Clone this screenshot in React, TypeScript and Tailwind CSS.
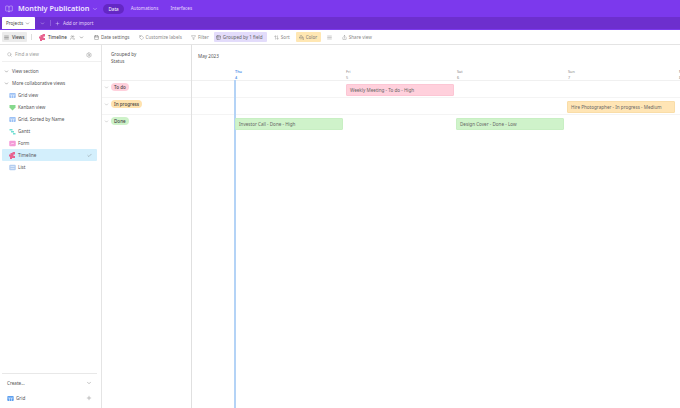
import React from 'react';
import { ChevronDown, Plus, Search, Settings, Check, Filter, ArrowUpDown, Share, Table2, Tag, PaintBucket, AlignJustify, BookOpen, Calendar, Users } from 'lucide-react';

function ViewIcon({ color, kind }: { color: string; kind: string }) {
  return (
    <svg width="7" height="7" viewBox="0 0 14 14" className="shrink-0">
      {kind === 'grid' && (
        <>
          <rect x="0.5" y="2" width="13" height="10" rx="2" fill={color} />
          <path d="M1 6h12M5 6v6M9 6v6" stroke="#fff" strokeWidth="1" />
        </>
      )}
      {kind === 'kanban' && <path d="M1 2h12v5l-6 6-6-6z" fill={color} />}
      {kind === 'gantt' && <path d="M1 2h6v3H1zM4 6h6v3H4zM8 10h5v3H8z" fill={color} />}
      {kind === 'form' && (
        <>
          <rect x="0.5" y="1.5" width="13" height="11" rx="2" fill={color} />
          <path d="M4 9l2-3 2 2 2-2" stroke="#fff" strokeWidth="1" fill="none" />
        </>
      )}
      {kind === 'timeline' && <path d="M7 0h5v5H9v3h3v4H6v2H2V9H0V5h3V2h4z" fill={color} />}
      {kind === 'list' && (
        <>
          <rect x="0.5" y="1.5" width="13" height="11" rx="2" fill={color} />
          <path d="M3 5h8M3 9h8" stroke="#fff" strokeWidth="1" />
        </>
      )}
    </svg>
  );
}

const views = [
  { name: 'Grid view', color: '#9cc1f5', kind: 'grid' },
  { name: 'Kanban view', color: '#86d98d', kind: 'kanban' },
  { name: 'Grid, Sorted by Name', color: '#9cc1f5', kind: 'grid' },
  { name: 'Gantt', color: '#72e0d4', kind: 'gantt' },
  { name: 'Form', color: '#f49ad8', kind: 'form' },
  { name: 'Timeline', color: '#e8638f', kind: 'timeline', active: true },
  { name: 'List', color: '#b3cdf0', kind: 'list' },
];

const groups = [
  { name: 'To do', className: 'bg-[#ffd0dc]', line: true },
  { name: 'In progress', className: 'bg-[#ffe2ae]', line: true },
  { name: 'Done', className: 'bg-[#cdf2c8]', line: false },
];

const days = [
  { label: 'Thu', num: '4', today: true },
  { label: 'Fri', num: '5' },
  { label: 'Sat', num: '6' },
  { label: 'Sun', num: '7' },
  { label: 'M', num: '8' },
];

const events = [
  { title: 'Weekly Meeting - To do - High', className: 'left-[154px] top-[39px] bg-[#ffd0dc] border-[#fcc6d4]' },
  { title: 'Hire Photographer - In progress - Medium', className: 'left-[375px] top-[56px] bg-[#ffe5b5] border-[#f9dda8]' },
  { title: 'Investor Call - Done - High', className: 'left-[43px] top-[73px] bg-[#cff3ca] border-[#c8efc3]' },
  { title: 'Design Cover - Done - Low', className: 'left-[264px] top-[73px] bg-[#cff3ca] border-[#c8efc3]' },
];

function ToolItem({ icon, label, className = '' }: { icon: React.ReactNode; label: string; className?: string }) {
  return (
    <div className={`flex h-[10px] items-center gap-[2px] rounded-[1px] ${className}`}>
      {icon}
      {label && <span>{label}</span>}
    </div>
  );
}

export default function App() {
  return (
    <div className="flex h-[408px] w-[680px] flex-col overflow-hidden bg-white font-['Noto_Sans',sans-serif] text-[4.6px] text-[#555]">
      <div className="flex h-[17px] shrink-0 items-center bg-[#7c39ed] text-white">
        <BookOpen size={8} strokeWidth={1.5} className="ml-[5px] text-[#ddd0fb]" />
        <span className="ml-[5px] text-[7.3px] leading-none font-semibold text-[#efe8fe]">Monthly Publication</span>
        <ChevronDown size={6} className="ml-[3px] text-[#d8c8fa]" />
        <span className="ml-[5px] rounded-full bg-[#6427c4] px-[5px] py-[2px] leading-[6px]">Data</span>
        <span className="ml-[7px] text-[#e6dbfc]">Automations</span>
        <span className="ml-[12px] text-[#e6dbfc]">Interfaces</span>
      </div>
      <div className="flex h-[12px] shrink-0 items-end bg-[#6d2fce] pr-1 pl-[2px]">
        <div className="flex h-[12px] w-[33px] items-center gap-[2px] rounded-t-[1px] bg-white pl-[4px] text-[#444]">
          Projects <ChevronDown size={5} />
        </div>
        <div className="flex h-[12px] items-center text-[#e3d6fb]">
          <ChevronDown size={5} className="ml-[5px]" />
          <div className="ml-[5px] h-[6px] w-px bg-[#8c5adb]" />
          <Plus size={5} className="ml-[4px]" />
          <span className="ml-[3px]">Add or import</span>
        </div>
      </div>
      <div className="h-px shrink-0 bg-[#7c39ed]" />
      <div className="flex h-[15px] shrink-0 items-center border-b border-[#e4e4e4] text-[#666]">
        <div className="ml-[2px] flex h-[10px] w-[25px] items-center gap-[3px] rounded-[1px] bg-[#ececec] pl-[2px] font-medium text-[#444]">
          <AlignJustify size={5} /> Views
        </div>
        <div className="ml-[4px] h-[6px] w-px bg-[#ddd]" />
        <div className="ml-[7px] flex w-[47px] shrink-0 items-center font-medium text-[#444]">
          <ViewIcon color="#e8638f" kind="timeline" />
          <span className="ml-[2px]">Timeline</span>
          <Users size={5} className="ml-[3px] text-[#888]" />
          <ChevronDown size={5} className="ml-[4px]" />
        </div>
        <ToolItem className="ml-[8px]" icon={<Calendar size={5} />} label="Date settings" />
        <ToolItem className="ml-[9px] text-[#888]" icon={<Tag size={5} />} label="Customize labels" />
        <ToolItem className="ml-[9px] text-[#888]" icon={<Filter size={5} />} label="Filter" />
        <ToolItem className="ml-[5px] w-[53px] shrink-0 bg-[#e3dcfb] px-[2px]" icon={<Table2 size={5} />} label="Grouped by 1 field" />
        <ToolItem className="ml-[7px] text-[#888]" icon={<ArrowUpDown size={5} />} label="Sort" />
        <ToolItem className="ml-[6px] w-[25px] shrink-0 bg-[#ffe7b3] px-[3px] text-[#777]" icon={<PaintBucket size={5} />} label="Color" />
        <ToolItem className="ml-[6px] text-[#888]" icon={<AlignJustify size={5} />} label="" />
        <ToolItem className="ml-[10px] text-[#888]" icon={<Share size={5} />} label="Share view" />
      </div>

      <div className="flex min-h-0 flex-1">
        <aside className="flex w-[102px] shrink-0 flex-col border-r border-[#e4e4e4] pl-[2px]">
          <div className="flex h-[17px] shrink-0 items-center border-b border-[#f0f0f0] pt-[3px] pr-[9px] pl-[5px] text-[#999]">
            <Search size={5} />
            <span className="ml-[3px]">Find a view</span>
            <Settings size={6} className="ml-auto" />
          </div>
          <div className="mt-[3px] flex h-[12px] items-center gap-[3px] pl-[2px]">
            <ChevronDown size={5} /> View section
          </div>
          <div className="flex h-[12px] items-center gap-[3px] pl-[2px]">
            <ChevronDown size={5} /> More collaborative views
          </div>
          {views.map((v) => (
            <div
              key={v.name}
              className={`flex h-[12px] w-[95px] items-center gap-[2px] rounded-[1px] pl-[7px] ${v.active ? 'bg-[#d3effc]' : ''}`}
            >
              <ViewIcon color={v.color} kind={v.kind} />
              <span>{v.name}</span>
              {v.active && <Check size={5} className="mr-[5px] ml-auto text-[#777]" />}
            </div>
          ))}
          <div className="mt-auto mr-[4px] flex h-[35px] flex-col border-t border-[#e8e8e8]">
            <div className="mt-[3px] flex h-[12px] items-center pr-[5px] pl-[5px]">
              Create...
              <ChevronDown size={6} className="ml-auto text-[#888]" />
            </div>
            <div className="mt-[3px] flex h-[12px] items-center gap-[2px] pr-[5px] pl-[5px]">
              <ViewIcon color="#5ea0ef" kind="grid" />
              <span>Grid</span>
              <Plus size={6} className="ml-auto text-[#888]" />
            </div>
          </div>
        </aside>

        <div className="flex w-[90px] shrink-0 flex-col border-r border-[#e0e0e0]">
          <div className="h-[36px] shrink-0 border-b border-[#f0f0f0] pt-[6px] pl-[9px] leading-[7px]">
            <div>Grouped by</div>
            <div>Status</div>
          </div>
          {groups.map((g) => (
            <div key={g.name} className={`flex h-[17px] shrink-0 items-start pt-[2px] pl-[2px] ${g.line ? 'border-b border-[#f4f4f4]' : ''}`}>
              <ChevronDown size={5} className="mt-[2px] text-[#999]" />
              <span className={`ml-[2px] rounded-full px-[3px] leading-[8px] font-medium text-[#444] ${g.className}`}>{g.name}</span>
            </div>
          ))}
        </div>

        <div className="relative min-w-0 flex-1 overflow-hidden">
          <div className="h-[36px] border-b border-[#f0f0f0]">
            <div className="pt-[8px] pl-[6px] leading-[7px]">May 2023</div>
            <div className="mt-[9px] flex pl-[43px]">
              {days.map((d) => (
                <div key={d.num} className={`w-[111px] shrink-0 text-[3.8px] leading-[6px] ${d.today ? 'font-semibold text-[#5b97ea]' : 'text-[#888]'}`}>
                  <div>{d.label}</div>
                  <div>{d.num}</div>
                </div>
              ))}
            </div>
          </div>
          <div className="h-[17px] border-b border-[#f4f4f4]" />
          <div className="h-[17px] border-b border-[#f4f4f4]" />
          <div className="absolute top-[35px] bottom-0 left-[42px] w-[2px] bg-[#b4d3f6]" />
          {events.map((e) => (
            <div
              key={e.title}
              className={`absolute flex h-[12px] w-[108px] items-center rounded-[1px] border pl-[3px] text-[#666] ${e.className}`}
            >
              {e.title}
            </div>
          ))}
        </div>
      </div>
    </div>
  );
}
